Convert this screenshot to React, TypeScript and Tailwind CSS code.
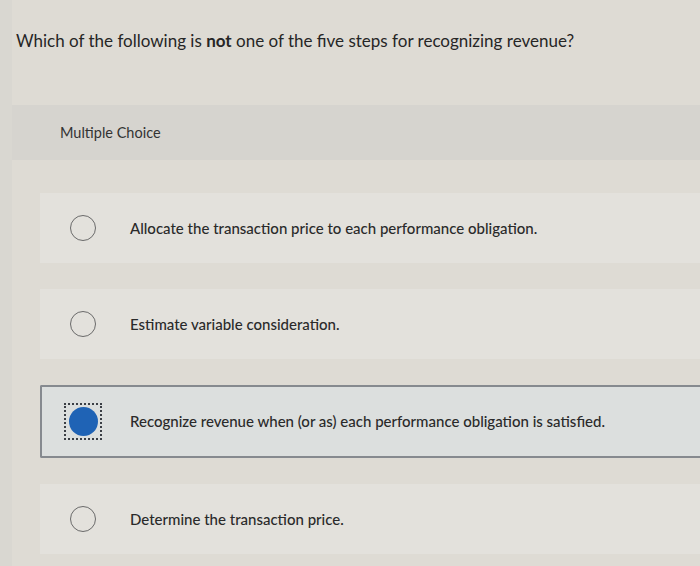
import React from "react";

const choices = [
  { id: "a", label: "Allocate the transaction price to each performance obligation." },
  { id: "b", label: "Estimate variable consideration." },
  { id: "c", label: "Recognize revenue when (or as) each performance obligation is satisfied." },
  { id: "d", label: "Determine the transaction price." },
];

const selected = "c";

function Radio({ checked }: { checked: boolean }) {
  if (checked) {
    return (
      <div className="w-[38px] h-[37px] border-2 border-dotted border-[#3b3f45] flex items-center justify-center">
        <div className="w-[29px] h-[29px] rounded-full bg-[#1f63b5]" />
      </div>
    );
  }
  return (
    <div className="w-[38px] h-[37px] flex items-center justify-center">
      <div className="w-[26px] h-[26px] rounded-full border-[1.5px] border-[#6a6a6a]" />
    </div>
  );
}

export default function App() {
  return (
    <div
      className="w-[700px] h-[566px] overflow-hidden bg-[#dedbd4] text-[#2a2a2a]"
      style={{ fontFamily: "Lato, 'Open Sans', sans-serif" }}
    >
      <div className="flex h-full">
        <div className="w-[12px] shrink-0 bg-[#d9d7d1]" />
        <div className="flex-1 flex flex-col">
          <p className="pt-[30px] pl-[4px] text-[17px] leading-[21px] text-[#262626]">
            Which of the following is <span className="font-bold">not</span> one of the five steps for
            recognizing revenue?
          </p>

          <div className="mt-[54px] h-[55px] bg-[#d6d4cf] flex items-center pl-[48px] text-[14.5px] text-[#333]">
            Multiple Choice
          </div>

          <div className="mt-[33px] flex flex-col gap-[26px] pl-[28px]">
            {choices.map((c) => {
              const isSel = c.id === selected;
              return (
                <div
                  key={c.id}
                  className={
                    isSel
                      ? "h-[73px] flex items-center pl-[22px] bg-[#dcdfde] border-2 border-r-0 border-[#868a8f] rounded-l-[2px]"
                      : "h-[70px] flex items-center pl-[24px] bg-[#e3e1dc]"
                  }
                >
                  <Radio checked={isSel} />
                  <span className="ml-[28px] text-[15px] font-medium text-[#2a2a2a]">{c.label}</span>
                </div>
              );
            })}
          </div>
        </div>
      </div>
    </div>
  );
}
